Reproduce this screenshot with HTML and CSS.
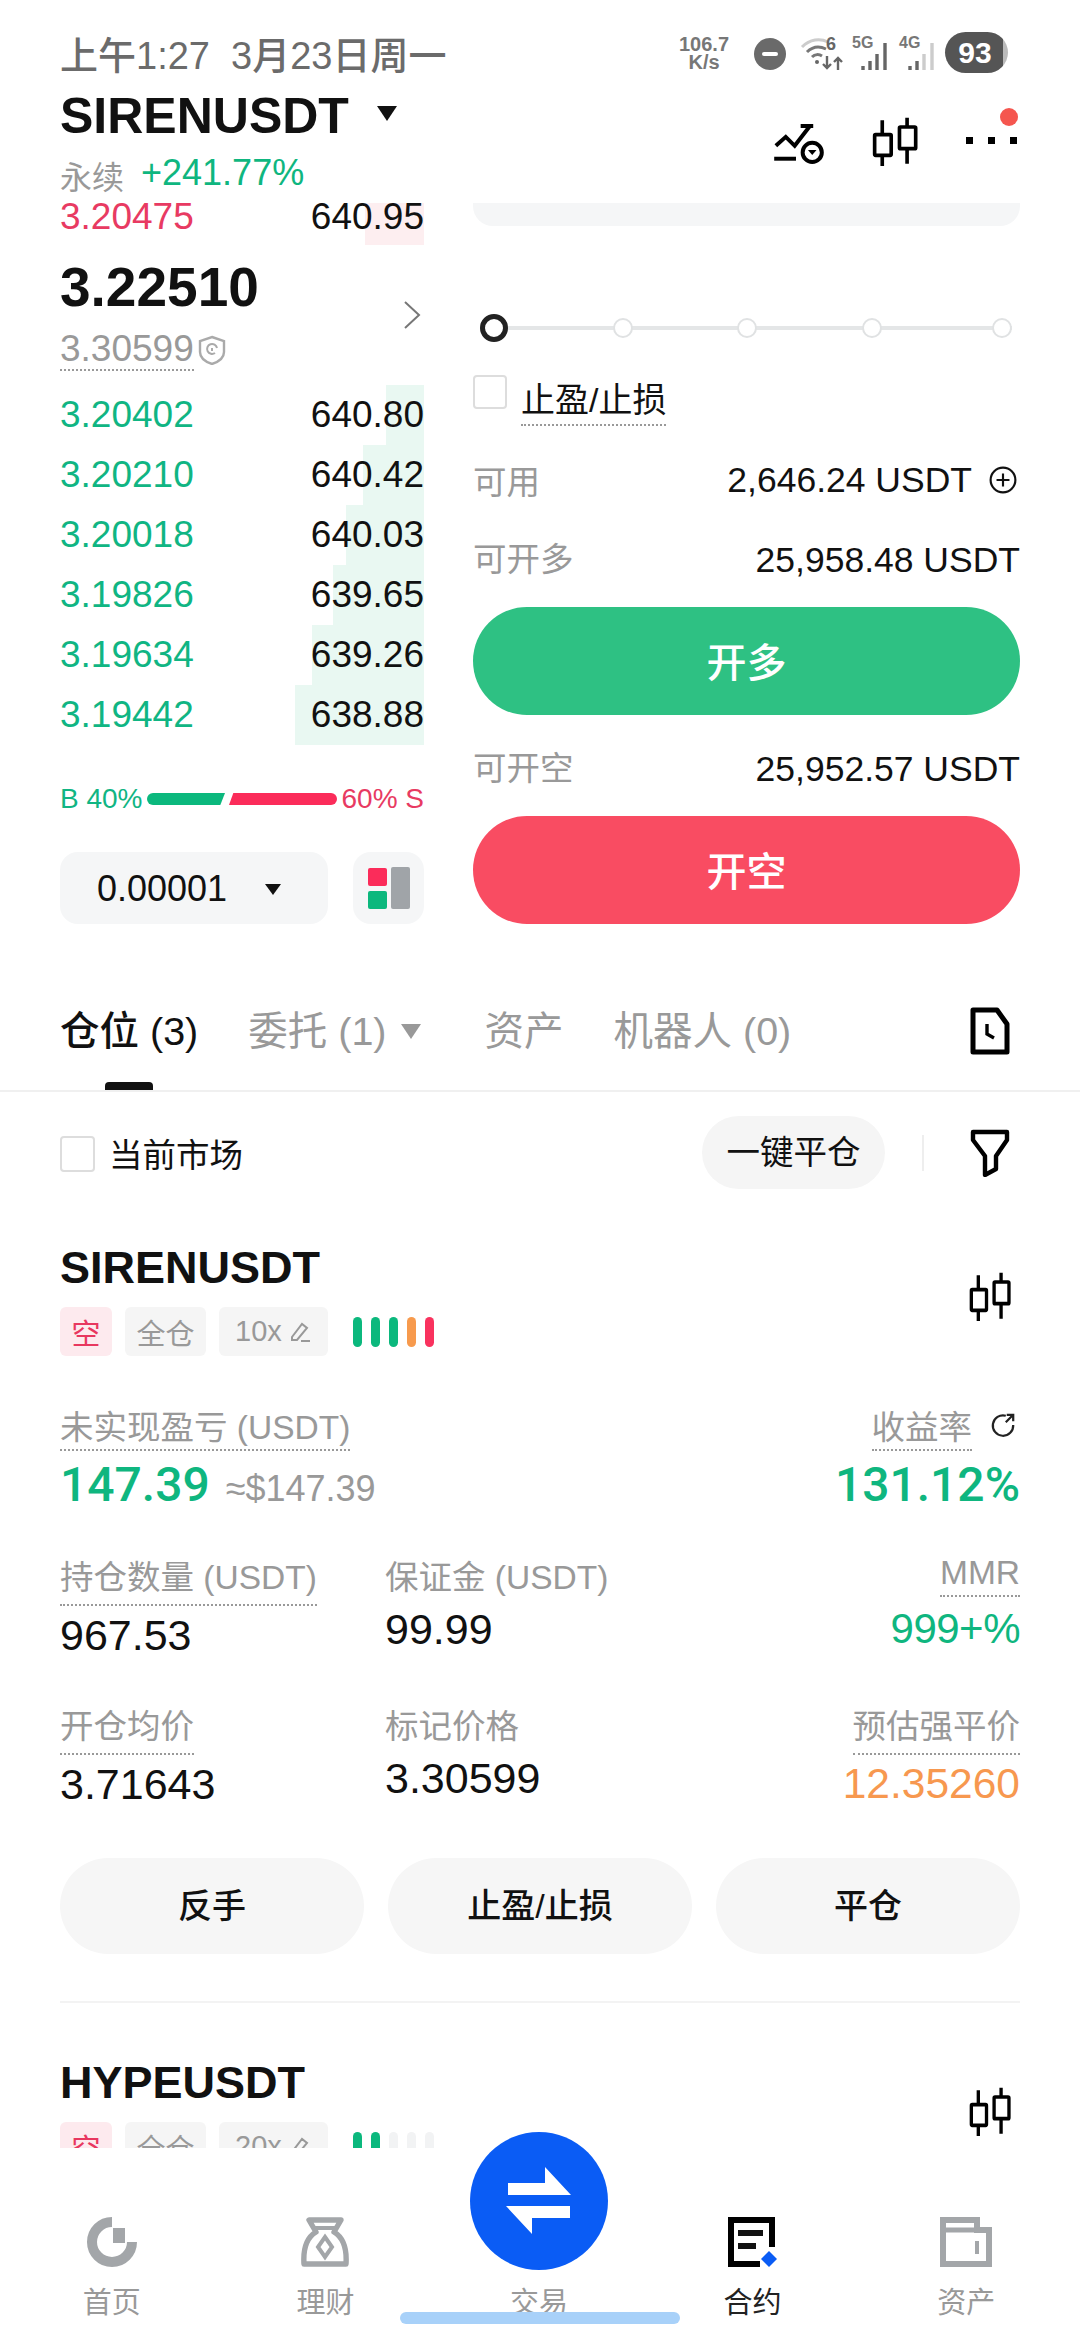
FILE: index.html
```html
<!DOCTYPE html>
<html lang="zh-CN">
<head>
    <meta charset="UTF-8">
    <title>SIRENUSDT</title>
    <link rel="stylesheet" href="styles.css">
</head>
<body>
<svg class="defs" width="0" height="0">
    <symbol id="candles" viewBox="630 290 145 150" preserveAspectRatio="none">
        <path d="M664 300V343M664 405V437M739 292V320M739 385V430" fill="none" stroke="#000" stroke-width="11"/>
        <rect x="641" y="343" width="50" height="62" rx="3" fill="none" stroke="#000" stroke-width="11"/>
        <rect x="716" y="320" width="49" height="65" rx="3" fill="none" stroke="#000" stroke-width="11"/>
    </symbol>
    <symbol id="pencil" viewBox="0 0 24 24">
        <path d="M4 17L14 4l5 4L9 20H4zM13 21h9" fill="none" stroke="#999" stroke-width="2"/>
    </symbol>
</svg>

<div class="page">
    <div class="statusbar">
        <span class="clock">上午1:27&nbsp; 3月23日周一</span>
        <div class="sys">
            <div class="speed"><span>106.7</span><span>K/s</span></div>
            <svg class="sys-dnd" width="32" height="32" viewBox="0 0 32 32"><circle cx="16" cy="16" r="16" fill="#6a6a6a"/><rect x="8" y="14" width="16" height="4" rx="2" fill="#fff"/></svg>
            <svg class="sys-wifi" width="44" height="36" viewBox="0 0 44 36">
                <path d="M2 11C10 3 20 2 28 6" fill="none" stroke="#ccc" stroke-width="3"/>
                <path d="M7 16C13 10 20 10 26 13" fill="none" stroke="#777" stroke-width="3"/>
                <path d="M12 21C15 18 19 18 22 20" fill="none" stroke="#777" stroke-width="3"/>
                <circle cx="17" cy="26" r="2" fill="#666"/>
                <path d="M27 20v12M23 28l4 4 4-4M38 34V22M34 26l4-4 4 4" fill="none" stroke="#666" stroke-width="2.4"/>
            </svg>
            <span class="wifi-num">6</span>
            <div class="sim">
                <span class="sim-tag">5G</span>
                <svg width="28" height="30" viewBox="0 0 28 30"><path d="M2 25v4M9 20v9M16 13v16M24 2v27" stroke="#666" stroke-width="3.4" fill="none"/></svg>
            </div>
            <div class="sim">
                <span class="sim-tag">4G</span>
                <svg width="28" height="30" viewBox="0 0 28 30"><path d="M2 25v4M9 20v9" stroke="#666" stroke-width="3.4" fill="none"/><path d="M16 13v16M24 2v27" stroke="#ccc" stroke-width="3.4" fill="none"/></svg>
            </div>
            <div class="battery">93</div>
        </div>
    </div>

    <div class="topbar">
        <div>
            <div class="title-row">
                <h1>SIRENUSDT</h1>
                <span class="tri tri-title"></span>
            </div>
            <div class="sub-row">
                <span class="sub-name">永续</span>
                <span class="sub-change">+241.77%</span>
            </div>
        </div>
        <div class="top-actions">
            <svg width="50" height="43" viewBox="340 300 150 130">
                <path d="M345 372L375 345L402 372L448 312M420 312H458V312" fill="none" stroke="#000" stroke-width="12"/>
                <path d="M340 411H406" stroke="#000" stroke-width="12"/>
                <circle cx="455" cy="392" r="29" fill="none" stroke="#000" stroke-width="12"/>
                <path d="M442 385H468L455 400z" fill="#000"/>
            </svg>
            <svg width="48" height="50"><use href="#candles"/></svg>
            <div class="more">
                <i></i><i></i><i></i>
                <span class="more-badge"></span>
            </div>
        </div>
    </div>

    <div class="scroll">
        <div class="trade">
            <div class="book">
                <div class="row row-clip">
                    <div class="depth depth-ask" style="width: 59px"></div>
                    <span class="ask">3.20475</span><span>640.95</span>
                </div>
                <div class="mid">
                    <div>
                        <div class="mid-price">3.22510</div>
                        <div class="mid-mark">
                            <span class="dotted">3.30599</span>
                            <svg width="28" height="30" viewBox="0 0 28 30">
                                <path d="M14 2L26 6V17C26 23 20 27 14 29C8 27 2 23 2 17V6z" fill="none" stroke="#aaa" stroke-width="2.4"/>
                                <path d="M17 18A5 5 0 1 1 19 13M14 13v3" fill="none" stroke="#aaa" stroke-width="2"/>
                            </svg>
                        </div>
                    </div>
                    <svg width="18" height="28" viewBox="0 0 18 28"><path d="M2 1L16 14L2 27" fill="none" stroke="#777" stroke-width="2"/></svg>
                </div>
                <div class="row"><div class="depth" style="width: 38px"></div><span class="bid">3.20402</span><span>640.80</span></div>
                <div class="row"><div class="depth" style="width: 61px"></div><span class="bid">3.20210</span><span>640.42</span></div>
                <div class="row"><div class="depth" style="width: 78px"></div><span class="bid">3.20018</span><span>640.03</span></div>
                <div class="row"><div class="depth" style="width: 91px"></div><span class="bid">3.19826</span><span>639.65</span></div>
                <div class="row"><div class="depth" style="width: 112px"></div><span class="bid">3.19634</span><span>639.26</span></div>
                <div class="row"><div class="depth" style="width: 129px"></div><span class="bid">3.19442</span><span>638.88</span></div>
                <div class="ratio">
                    <span class="bid">B 40%</span>
                    <div class="ratio-bar">
                        <div class="ratio-buy"></div>
                        <div class="ratio-sell"></div>
                    </div>
                    <span class="ask">60% S</span>
                </div>
                <div class="book-tools">
                    <div class="precision">0.00001 <span class="tri tri-small"></span></div>
                    <div class="layout-btn">
                        <div class="layout-stack"><i class="lay-red"></i><i class="lay-green"></i></div>
                        <i class="lay-gray"></i>
                    </div>
                </div>
            </div>

            <div class="form">
                <div class="panel-end"></div>
                <div class="slider">
                    <span class="knob"></span>
                    <span class="stop"></span><span class="stop"></span><span class="stop"></span><span class="stop stop-last"></span>
                </div>
                <div class="sl-row">
                    <span class="check"></span>
                    <span class="dotted sl-label">止盈/止损</span>
                </div>
                <div class="info info-avail">
                    <span class="info-label">可用</span>
                    <span class="info-val">2,646.24 USDT<svg width="28" height="28" viewBox="0 0 26 26"><circle cx="13" cy="13" r="11.5" fill="none" stroke="#111" stroke-width="2"/><path d="M13 7v12M7 13h12" stroke="#111" stroke-width="2"/></svg></span>
                </div>
                <div class="info info-long">
                    <span class="info-label">可开多</span>
                    <span class="info-val">25,958.48 USDT</span>
                </div>
                <div class="cta cta-long">开多</div>
                <div class="info info-short">
                    <span class="info-label">可开空</span>
                    <span class="info-val">25,952.57 USDT</span>
                </div>
                <div class="cta cta-short">开空</div>
            </div>
        </div>

        <div class="tabs">
            <div class="tab tab-on">仓位 (3)<span class="tab-mark"></span></div>
            <div class="tab tab-orders">委托 (1)<span class="tri tri-tab"></span></div>
            <div class="tab tab-assets">资产</div>
            <div class="tab tab-bots">机器人 (0)</div>
            <svg class="tab-history" width="40" height="48" viewBox="0 0 40 48">
                <path d="M3 3H27L37 17V45H3z" fill="none" stroke="#000" stroke-width="5" stroke-linejoin="round"/>
                <path d="M17 17V27L24 31" fill="none" stroke="#000" stroke-width="3.4"/>
            </svg>
        </div>

        <div class="filters">
            <span class="check check-filter"></span>
            <span class="filter-label">当前市场</span>
            <div class="pill">一键平仓</div>
            <span class="filter-sep"></span>
            <svg width="40" height="48" viewBox="0 0 40 48">
                <path d="M3 3H37V11L26 27V40L15 46V27L3 11z" fill="none" stroke="#000" stroke-width="4.4" stroke-linejoin="round"/>
            </svg>
        </div>

        <div class="position">
            <div class="pos-head">
                <div>
                    <h2>SIRENUSDT</h2>
                    <div class="tags">
                        <span class="tag tag-side">空</span>
                        <span class="tag">全仓</span>
                        <span class="tag tag-lev">10x <svg width="24" height="24"><use href="#pencil"/></svg></span>
                        <div class="risk"><i class="r-g"></i><i class="r-g"></i><i class="r-g"></i><i class="r-o"></i><i class="r-p"></i></div>
                    </div>
                </div>
                <svg class="pos-candles" width="44" height="50"><use href="#candles"/></svg>
            </div>

            <div class="pnl">
                <div>
                    <span class="label dotted">未实现盈亏 (USDT)</span>
                    <div class="pnl-val"><span class="big up">147.39</span><span class="approx">≈$147.39</span></div>
                </div>
                <div class="right">
                    <div class="roe-head">
                        <span class="label dotted">收益率</span>
                        <svg width="26" height="28" viewBox="0 0 28 28"><path d="M17 4A11 11 0 1 0 25 14" fill="none" stroke="#222" stroke-width="2.4"/><path d="M17 11L25 3M18 3H25V10" fill="none" stroke="#222" stroke-width="2.4"/></svg>
                    </div>
                    <div class="pnl-val pnl-val-r"><span class="big up">131.12%</span></div>
                </div>
            </div>

            <div class="metrics">
                <div class="metric">
                    <span class="label dotted">持仓数量 (USDT)</span>
                    <div class="val val-dotted">967.53</div>
                </div>
                <div class="metric">
                    <span class="label">保证金 (USDT)</span>
                    <div class="val">99.99</div>
                </div>
                <div class="metric right metric-mmr">
                    <span class="label dotted">MMR</span>
                    <div class="val up">999+%</div>
                </div>
                <div class="metric">
                    <span class="label dotted">开仓均价</span>
                    <div class="val val-dotted">3.71643</div>
                </div>
                <div class="metric">
                    <span class="label">标记价格</span>
                    <div class="val">3.30599</div>
                </div>
                <div class="metric right">
                    <span class="label dotted">预估强平价</span>
                    <div class="val val-dotted warn">12.35260</div>
                </div>
            </div>

            <div class="actions">
                <div class="action">反手</div>
                <div class="action">止盈/止损</div>
                <div class="action">平仓</div>
            </div>
        </div>

        <div class="position position-next">
            <div class="pos-head">
                <div>
                    <h2>HYPEUSDT</h2>
                    <div class="tags">
                        <span class="tag tag-side">空</span>
                        <span class="tag">全仓</span>
                        <span class="tag tag-lev">20x <svg width="24" height="24"><use href="#pencil"/></svg></span>
                        <div class="risk"><i class="r-g"></i><i class="r-g"></i><i class="r-n"></i><i class="r-n"></i><i class="r-n"></i></div>
                    </div>
                </div>
                <svg class="pos-candles" width="44" height="50"><use href="#candles"/></svg>
            </div>
        </div>
    </div>

    <div class="nav">
        <div class="nav-item">
            <svg width="52" height="50" viewBox="0 0 52 50">
                <path d="M26 5A20 20 0 1 0 46 25" fill="none" stroke="#a3a6a9" stroke-width="10"/>
                <path d="M27 11H39V26H27z" fill="#a3a6a9"/>
            </svg>
            <span>首页</span>
        </div>
        <div class="nav-item">
            <svg width="48" height="50" viewBox="0 0 48 50">
                <path d="M8 3H40L33 15C43 21 46 32 45 47H3C2 32 5 21 15 15z" fill="none" stroke="#a3a6a9" stroke-width="5.4" stroke-linejoin="round"/>
                <path d="M12 11H36" stroke="#a3a6a9" stroke-width="4"/>
                <path d="M24 20L31 30L24 40L17 30z" fill="none" stroke="#a3a6a9" stroke-width="4"/>
            </svg>
            <span>理财</span>
        </div>
        <div class="nav-item">
            <div class="nav-spacer"></div>
            <span>交易</span>
        </div>
        <div class="nav-item nav-on">
            <svg width="50" height="50" viewBox="0 0 50 50">
                <path d="M44 30V3H3V47H32" fill="none" stroke="#000" stroke-width="6"/>
                <path d="M10 13H35V19H10zM10 26H28V32H10z" fill="#111"/>
                <path d="M41 34L49 42L41 50L33 42z" fill="#0a5cf5"/>
            </svg>
            <span>合约</span>
        </div>
        <div class="nav-item">
            <svg width="52" height="50" viewBox="0 0 52 50">
                <path d="M3 47V3H37V13H49V47z" fill="none" stroke="#a3a6a9" stroke-width="6"/>
                <path d="M3 13H37" stroke="#a3a6a9" stroke-width="5"/>
                <path d="M37 24V37" stroke="#a3a6a9" stroke-width="4"/>
            </svg>
            <span>资产</span>
        </div>
        <div class="swap">
            <svg width="66" height="68" viewBox="0 0 66 68">
                <path d="M2 16H39V0L65 28H2zM64 39V51H26V67L0 39z" fill="#fff"/>
            </svg>
        </div>
        <div class="home-bar"></div>
    </div>
</div>
</body>
</html>
```

FILE: styles.css
```css
* {
    box-sizing: border-box;
}

body {
    margin: 0;
    background: #fff;
    color: #111;
    font-family: "Liberation Sans", "Noto Sans CJK SC", sans-serif;
}

h1, h2 {
    margin: 0;
    font-weight: 700;
}

.defs {
    position: absolute;
}

.page {
    width: 1080px;
    height: 2340px;
    display: flex;
    flex-direction: column;
    overflow: hidden;
}

.up { color: #0fb67f; }
.warn { color: #f7984f; }
.bid { color: #10b583; }
.ask { color: #e83a62; }

.dotted {
    display: inline-block;
    border-bottom: 2px dotted #999;
}

.tri {
    display: inline-block;
    width: 0;
    height: 0;
    border-left: 10px solid transparent;
    border-right: 10px solid transparent;
    border-top: 15px solid #111;
}

/* status bar */
.statusbar {
    height: 80px;
    flex: none;
    display: flex;
    justify-content: space-between;
    padding: 32px 72px 0 60px;
}

.clock {
    font-size: 38px;
    line-height: 46px;
    margin-top: 1px;
    color: #6b6b6b;
    font-weight: 500;
}

.sys {
    display: flex;
    align-items: flex-start;
    height: 42px;
    position: relative;
}

.speed {
    display: flex;
    flex-direction: column;
    align-items: center;
    width: 54px;
    margin: 3px 23px 0 0;
    font-size: 20px;
    line-height: 18px;
    font-weight: 700;
    color: #777;
}

.sys-dnd {
    margin: 6px 14px 0 0;
}

.sys-wifi {
    margin: 4px 8px 0 0;
}

.wifi-num {
    position: absolute;
    left: 149px;
    top: 2px;
    font-size: 18px;
    font-weight: 700;
    color: #666;
}

.sim {
    position: relative;
    width: 38px;
    height: 40px;
    margin-right: 9px;
}

.sim svg {
    position: absolute;
    left: 9px;
    top: 9px;
}

.sim-tag {
    position: absolute;
    left: 0;
    top: 3px;
    font-size: 16px;
    line-height: 16px;
    font-weight: 700;
    color: #777;
}

.battery {
    width: 63px;
    height: 41px;
    margin-left: -1px;
    border-radius: 21px;
    background: linear-gradient(90deg, #555 92%, #bbb 92%);
    color: #fff;
    font-size: 30px;
    font-weight: 700;
    line-height: 41px;
    text-align: center;
    padding-right: 3px;
}

/* top bar */
.topbar {
    height: 116px;
    flex: none;
    display: flex;
    justify-content: space-between;
    padding: 9px 62px 0 60px;
}

.title-row {
    display: flex;
    align-items: center;
    height: 54px;
}

h1 {
    font-size: 50px;
    line-height: 54px;
}

.tri-title {
    margin: 0 0 6px 28px;
}

.sub-row {
    display: flex;
    align-items: flex-start;
    gap: 17px;
    margin-top: 13px;
}

.sub-name {
    font-size: 32px;
    line-height: 44px;
    color: #999;
}

.sub-change {
    font-size: 36px;
    line-height: 36px;
    color: #0fb67f;
    margin-top: -1px;
}

.top-actions {
    display: flex;
    align-items: flex-start;
    gap: 47px;
    padding-top: 28px;
}

.top-actions > svg:first-child {
    margin-top: 5px;
}

.more {
    position: relative;
    display: flex;
    gap: 15px;
    width: 52px;
    padding-top: 20px;
}

.more i {
    width: 7px;
    height: 7px;
    background: #000;
}

.more-badge {
    position: absolute;
    right: 0;
    top: -9px;
    width: 18px;
    height: 18px;
    border-radius: 50%;
    background: #f5564f;
}

/* scrolling content */
.scroll {
    flex: 1;
    min-height: 0;
    overflow: hidden;
    padding-top: 7px;
}

.trade {
    display: flex;
    gap: 49px;
    padding: 0 60px;
}

.book {
    width: 364px;
    flex: none;
}

.row {
    position: relative;
    display: flex;
    justify-content: space-between;
    align-items: center;
    height: 60px;
    font-size: 37px;
    line-height: 28px;
}

.row span {
    position: relative;
}

.row-clip {
    height: 42px;
    align-items: flex-start;
}

.depth {
    position: absolute;
    right: 0;
    top: 0;
    bottom: 0;
    background: #e9f8f2;
}

.depth-ask {
    background: #fdeef0;
}

.mid {
    height: 140px;
    display: flex;
    justify-content: space-between;
    align-items: center;
    padding: 0 3px 0 0;
}

.mid-price {
    font-size: 55px;
    font-weight: 700;
    line-height: 54px;
}

.mid-mark {
    display: flex;
    align-items: center;
    gap: 4px;
    margin-top: 15px;
    font-size: 37px;
    line-height: 40px;
    color: #999;
}

.ratio {
    display: flex;
    align-items: center;
    justify-content: space-between;
    height: 28px;
    margin-top: 40px;
    font-size: 28px;
}

.ratio-bar {
    display: flex;
    gap: 4px;
    width: 190px;
}

.ratio-buy,
.ratio-sell {
    height: 12px;
    border-radius: 6px 0 0 6px;
    background: #0bb87d;
    clip-path: polygon(0 0, 100% 0, 94% 100%, 0 100%);
    width: 78px;
}

.ratio-sell {
    flex: 1;
    background: #fb2c5a;
    border-radius: 0 6px 6px 0;
    clip-path: polygon(4% 0, 100% 0, 100% 100%, 0 100%);
}

.book-tools {
    display: flex;
    justify-content: space-between;
    margin-top: 39px;
}

.precision {
    width: 268px;
    height: 72px;
    display: flex;
    align-items: center;
    gap: 38px;
    padding: 2px 0 0 37px;
    background: #f5f6f7;
    border-radius: 18px;
    font-size: 36px;
}

.tri-small {
    border-left-width: 8px;
    border-right-width: 8px;
    border-top-width: 11px;
}

.layout-btn {
    width: 71px;
    height: 72px;
    display: flex;
    align-items: center;
    justify-content: center;
    gap: 4px;
    background: #f5f6f7;
    border-radius: 18px;
}

.layout-stack {
    display: flex;
    flex-direction: column;
    gap: 5px;
}

.layout-stack i {
    display: block;
    width: 19px;
    height: 18px;
    border-radius: 2px;
}

.lay-red { background: #fb2c5a; }
.lay-green { background: #0bb87d; }

.lay-gray {
    width: 19px;
    height: 42px;
    border-radius: 2px;
    background: #a0a4a8;
}

/* order form */
.form {
    flex: 1;
}

.panel-end {
    height: 23px;
    background: #f5f6f7;
    border-radius: 0 0 20px 20px;
}

.slider {
    display: flex;
    justify-content: space-between;
    align-items: center;
    height: 28px;
    margin: 88px 8px 0 7px;
    background: linear-gradient(#e4e6e7, #e4e6e7) center / 100% 4px no-repeat;
}

.knob {
    width: 28px;
    height: 28px;
    border: 5px solid #222;
    border-radius: 50%;
    background: #fff;
}

.stop {
    width: 20px;
    height: 20px;
    border: 2px solid #e0e2e3;
    border-radius: 50%;
    background: #fff;
}

.stop-last {
    margin-left: 6px;
}

.sl-row {
    display: flex;
    gap: 14px;
    margin-top: 33px;
}

.check {
    width: 34px;
    height: 34px;
    flex: none;
    border: 2px solid #ddd;
    border-radius: 4px;
}

.sl-label {
    font-size: 34px;
    line-height: 46px;
    margin-top: 2px;
    padding-bottom: 1px;
}

.info {
    display: flex;
    justify-content: space-between;
    align-items: center;
    height: 48px;
}

.info-avail { margin-top: 33px; }
.info-long { margin-top: 29px; }
.info-short { margin-top: 30px; }

.info-label {
    font-size: 33.5px;
    line-height: 48px;
    margin-top: -1px;
    color: #999;
}

.info-val {
    display: flex;
    align-items: center;
    gap: 17px;
    font-size: 35.5px;
}

.info-avail .info-val {
    margin: -6px 3px 0 0;
}

.cta {
    height: 108px;
    margin-top: 23px;
    border-radius: 54px;
    color: #fff;
    font-size: 40px;
    font-weight: 500;
    line-height: 112px;
    text-align: center;
}

.cta-long { background: #2ec183; }
.cta-short { background: #f94c62; }

/* tabs */
.tabs {
    display: flex;
    align-items: center;
    height: 85px;
    margin-top: 83px;
    padding: 0 70px 35px 60px;
    border-bottom: 2px solid #f0f0f0;
}

.tab {
    position: relative;
    display: flex;
    align-items: center;
    font-size: 39.5px;
    line-height: 48px;
    color: #999;
    white-space: nowrap;
}

.tab-on {
    color: #111;
    font-weight: 500;
}

.tab-orders { margin-left: 50px; }
.tab-assets { margin-left: 64px; }
.tab-bots { margin-left: 50px; }

.tab-mark {
    position: absolute;
    left: 45px;
    bottom: -35px;
    width: 48px;
    height: 8px;
    border-radius: 4px 4px 0 0;
    background: #111;
}

.tri-tab {
    margin-left: 14px;
    border-top-color: #999;
}

.tab-history {
    margin-left: auto;
}

/* filter row */
.filters {
    display: flex;
    align-items: center;
    height: 73px;
    margin-top: 24px;
    padding: 0 70px 0 60px;
}

.check-filter {
    width: 35px;
    height: 36px;
    margin-top: 2px;
}

.filter-label {
    margin-left: 14px;
    font-size: 33.5px;
}

.pill {
    margin-left: auto;
    width: 183px;
    height: 73px;
    border-radius: 37px;
    background: #f5f5f5;
    font-size: 33.5px;
    line-height: 73px;
    text-align: center;
}

.filter-sep {
    width: 2px;
    height: 36px;
    margin: 0 46px 0 37px;
    background: #eee;
}

/* positions */
.position {
    margin: 53px 60px 0;
    padding-bottom: 47px;
    border-bottom: 2px solid #f3f3f3;
}

.position-next {
    margin-top: 54px;
    border-bottom: 0;
}

.pos-head {
    display: flex;
    justify-content: space-between;
    align-items: center;
}

.pos-candles {
    margin: -4px 8px 0 0;
}

h2 {
    font-size: 45px;
    line-height: 52px;
    height: 50px;
}

.tags {
    display: flex;
    align-items: center;
    gap: 13px;
    margin-top: 15px;
}

.tag {
    display: flex;
    align-items: center;
    justify-content: center;
    gap: 6px;
    width: 81px;
    height: 49px;
    border-radius: 6px;
    background: #f5f5f5;
    color: #999;
    font-size: 29px;
}

.tag-side {
    width: 52px;
    background: #fdeaee;
    color: #e8375f;
}

.tag-lev {
    width: 109px;
}

.risk {
    display: flex;
    gap: 9px;
    margin-left: 12px;
}

.risk i {
    width: 9px;
    height: 30px;
    border-radius: 5px;
}

.r-g { background: #0bb87d; }
.r-o { background: #f79a4d; }
.r-p { background: #f9325e; }
.r-n { background: #f2f3f4; }

.pnl {
    display: flex;
    justify-content: space-between;
    margin-top: 51px;
}

.right {
    text-align: right;
}

.label {
    font-size: 33.5px;
    line-height: 42px;
    color: #999;
}

.roe-head {
    display: flex;
    justify-content: flex-end;
    align-items: flex-start;
    gap: 18px;
}

.roe-head svg {
    margin: 4px 4px 0 0;
}

.pnl-val {
    display: flex;
    align-items: baseline;
    gap: 16px;
    height: 60px;
    line-height: 60px;
    margin-top: 4px;
}

.pnl-val-r {
    justify-content: flex-end;
}

.big {
    font-family: Roboto, "Liberation Sans", sans-serif;
    font-size: 48px;
    font-weight: 500;
}

.approx {
    font-size: 36px;
    color: #999;
}

.metrics {
    display: grid;
    grid-template-columns: 325px 325px 310px;
    row-gap: 46px;
    margin-top: 42px;
}

.metric .dotted {
    padding-bottom: 5px;
}

.val {
    font-size: 43px;
    line-height: 50px;
    margin-top: 5px;
}

.val-dotted {
    margin-top: 4px;
}

.val.warn {
    font-size: 42.5px;
}

.metric-mmr {
    margin-top: -5px;
}

.metric-mmr .dotted {
    padding-bottom: 1px;
}

.metric-mmr .val {
    margin-top: 7px;
    font-size: 42px;
    letter-spacing: -0.5px;
}

.actions {
    display: flex;
    gap: 24px;
    margin-top: 49px;
}

.action {
    flex: 1;
    height: 96px;
    border-radius: 48px;
    background: #f6f6f6;
    font-size: 34px;
    font-weight: 500;
    line-height: 96px;
    text-align: center;
}

/* bottom nav */
.nav {
    position: relative;
    height: 192px;
    flex: none;
    display: grid;
    grid-template-columns: repeat(5, 1fr);
    padding: 0 7px 0 5px;
    background: #fff;
}

.nav-item {
    display: flex;
    flex-direction: column;
    align-items: center;
    padding-top: 69px;
    font-size: 29px;
    line-height: 40px;
    color: #999;
}

.nav-item span {
    margin-top: 16px;
}

.nav-spacer {
    height: 50px;
}

.nav-on {
    color: #222;
}

.swap {
    position: absolute;
    left: 470px;
    top: -16px;
    width: 138px;
    height: 138px;
    display: flex;
    align-items: center;
    justify-content: center;
    border-radius: 50%;
    background: #0a5cf5;
}

.home-bar {
    position: absolute;
    left: 400px;
    top: 164px;
    width: 280px;
    height: 12px;
    border-radius: 6px;
    background: #a8d1f9;
}
```
